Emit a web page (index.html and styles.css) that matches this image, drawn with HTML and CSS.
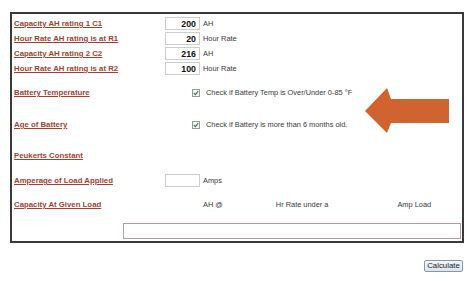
FILE: index.html
```html
<!DOCTYPE html>
<html lang="en">
<head>
    <meta charset="UTF-8">
    <title>Peukert Calculator</title>
    <link rel="stylesheet" href="styles.css">
</head>
<body>
    <div class="panel">
        <div class="row">
            <a class="label" href="#">Capacity AH rating 1 C1</a>
            <input class="num" type="text" value="200">
            <span class="unit">AH</span>
        </div>
        <div class="row">
            <a class="label" href="#">Hour Rate AH rating is at R1</a>
            <input class="num" type="text" value="20">
            <span class="unit">Hour Rate</span>
        </div>
        <div class="row">
            <a class="label" href="#">Capacity AH rating 2 C2</a>
            <input class="num" type="text" value="216">
            <span class="unit">AH</span>
        </div>
        <div class="row">
            <a class="label" href="#">Hour Rate AH rating is at R2</a>
            <input class="num" type="text" value="100">
            <span class="unit">Hour Rate</span>
        </div>

        <div class="row temp">
            <a class="label" href="#">Battery Temperature</a>
            <span class="check">
                <svg width="8" height="8" viewBox="0 0 8 8">
                    <rect x="0.5" y="0.5" width="7" height="7" fill="#f3f7f3" stroke="#8e9e92"/>
                    <path d="M1.8 4.1 L3.3 5.6 L6.2 2.2" fill="none" stroke="#3d6b50" stroke-width="1.1"/>
                </svg>
            </span>
            <span class="unit note">Check if Battery Temp is Over/Under 0-85 °F</span>
        </div>
        <div class="row age">
            <a class="label" href="#">Age of Battery</a>
            <span class="check">
                <svg width="8" height="8" viewBox="0 0 8 8">
                    <rect x="0.5" y="0.5" width="7" height="7" fill="#f3f7f3" stroke="#8e9e92"/>
                    <path d="M1.8 4.1 L3.3 5.6 L6.2 2.2" fill="none" stroke="#3d6b50" stroke-width="1.1"/>
                </svg>
            </span>
            <span class="unit note">Check if Battery is more than 6 months old.</span>
        </div>

        <div class="row peukert">
            <a class="label" href="#">Peukerts Constant</a>
        </div>
        <div class="row amps">
            <a class="label" href="#">Amperage of Load Applied</a>
            <input class="num" type="text" value="">
            <span class="unit">Amps</span>
        </div>
        <div class="row load">
            <a class="label" href="#">Capacity At Given Load</a>
            <span class="spacer"></span>
            <span class="unit">AH @</span>
            <span class="unit hr">Hr Rate under a</span>
            <span class="unit amp">Amp Load</span>
        </div>

        <div class="result"></div>

        <!-- big arrow pointing at the checkboxes -->
        <svg class="arrow" width="84" height="47" viewBox="0 0 84 47">
            <polygon points="0,24 22,1 26,12 84,12 84,36 26,36 22,46" fill="#d0632f"/>
        </svg>
    </div>

    <div class="actions">
        <button class="calc">Calculate</button>
    </div>
</body>
</html>
```

FILE: styles.css
```css
body{
    margin: 0;
    background: #fff;
    font-family: "Liberation Sans", Arial, sans-serif;
    color: #333;
}

.panel{
    position: relative;
    width: 454px;
    margin: 12px 0 0 10px;
    padding: 2px 2px 2px 2px;
    border: 2px solid #3a3a3a;
    box-sizing: border-box;
}

.row{
    display: flex;
    align-items: center;
    height: 15px;
}
.temp{ margin-top: 9px; }
.age{ margin-top: 17px; }
.peukert{ margin-top: 16px; }
.amps{ margin-top: 10px; }
.load{ margin-top: 9px; }

.label{
    width: 151px;
    flex: none;
    font-size: 7.8px;
    font-weight: bold;
    color: #a63f2e;
    text-decoration: underline;
}

.num{
    width: 35px;
    height: 13px;
    padding: 0 3px 0 0;
    margin: 0;
    border: 1px solid #cdcdcd;
    box-sizing: border-box;
    text-align: right;
    font-family: "Liberation Sans", Arial, sans-serif;
    font-size: 8.8px;
    font-weight: bold;
    color: #111;
    flex: none;
    outline: none;
}

.unit{
    margin-left: 3px;
    font-size: 7.4px;
    color: #3a3a3a;
}

.check{
    width: 35px;
    flex: none;
    display: flex;
    justify-content: flex-end;
}
.check svg{
    display: block;
}
.note{
    margin-left: 6px;
}

.spacer{
    width: 35px;
    flex: none;
}
.hr{ margin-left: 53px; }
.amp{ margin-left: 69px; }

.result{
    width: 338px;
    height: 16px;
    margin: 11px 0 0 109px;
    border: 1.5px solid #b8999f;
    box-sizing: border-box;
}

.arrow{
    position: absolute;
    left: 353px;
    top: 73px;
}

.actions{
    width: 463px;
    margin-top: 11px;
    text-align: right;
}
.calc{
    height: 12px;
    width: 39px;
    padding: 0;
    font-family: "Liberation Sans", Arial, sans-serif;
    font-size: 7.8px;
    color: #222;
    background: linear-gradient(#f4f7fb, #dde4ee);
    border: 1px solid #8596ad;
    border-radius: 2px;
    line-height: 10px;
}
```
